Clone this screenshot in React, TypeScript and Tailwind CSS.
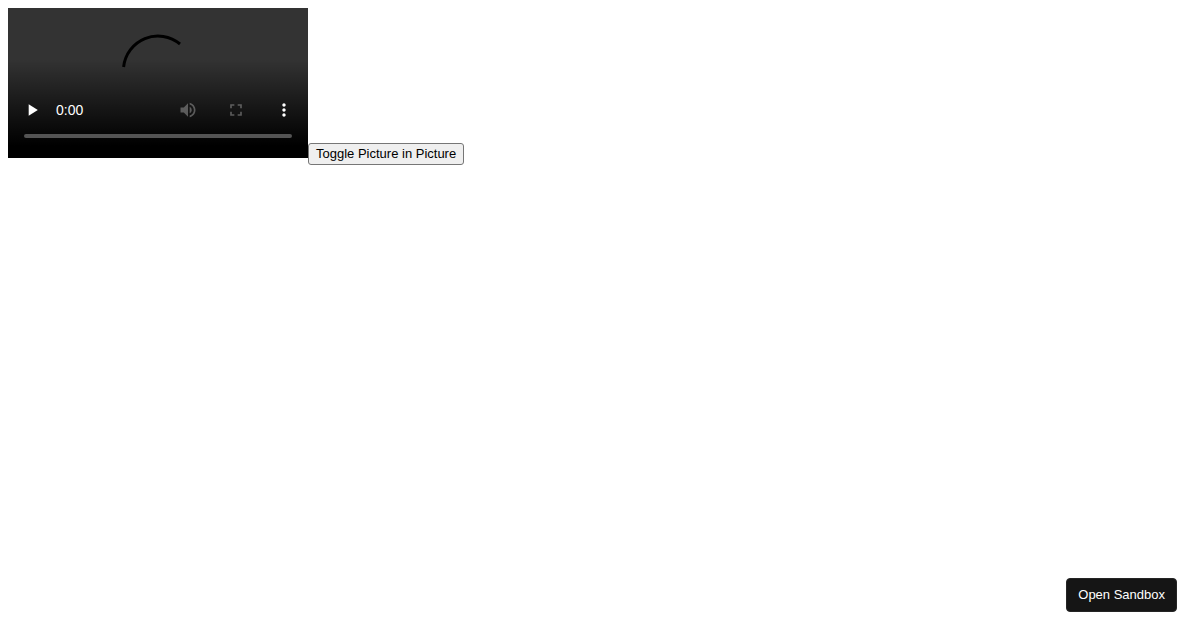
import { MdFullscreen, MdMoreVert, MdPlayArrow, MdVolumeUp } from 'react-icons/md';

function Spinner() {
  return (
    <svg
      className="absolute left-0 top-0"
      width="300"
      height="150"
      viewBox="0 0 300 150"
      fill="none"
      aria-hidden="true"
    >
      <path
        d="M115.6 59A34.5 34.5 0 0 1 172 36"
        stroke="#000"
        strokeWidth="3"
      />
    </svg>
  );
}

function VideoPlayer() {
  return (
    <section
      aria-label="Video player"
      className="relative flex w-[300px] flex-col bg-[#333] pt-[78px] font-['Liberation_Sans',Arial,sans-serif]"
    >
      <div className="absolute inset-0 bg-[linear-gradient(to_bottom,transparent_34%,#000000a0_70%,#000_92%)]" />
      <Spinner />
      <div className="relative flex h-12 items-center text-white">
        <button type="button" aria-label="Play" className="flex size-12 items-center justify-center">
          <MdPlayArrow className="size-5" />
        </button>
        <span className="text-sm">0:00</span>
        <div className="ml-auto flex">
          <button
            type="button"
            aria-label="Mute"
            disabled
            className="flex size-12 items-center justify-center opacity-30"
          >
            <MdVolumeUp className="size-5" />
          </button>
          <button
            type="button"
            aria-label="Full screen"
            disabled
            className="flex size-12 items-center justify-center opacity-30"
          >
            <MdFullscreen className="size-5" />
          </button>
          <button
            type="button"
            aria-label="More options"
            className="flex size-12 items-center justify-center"
          >
            <MdMoreVert className="size-5" />
          </button>
        </div>
      </div>
      <input
        type="range"
        aria-label="Seek"
        min={0}
        max={100}
        defaultValue={0}
        disabled
        className="relative mx-4 mb-5 block h-1 appearance-none rounded-full bg-[#545454] [&::-webkit-slider-thumb]:size-0 [&::-webkit-slider-thumb]:appearance-none"
      />
    </section>
  );
}

export default function App() {
  return (
    <main className="min-h-screen bg-white p-2 font-['Liberation_Sans',Arial,sans-serif] text-[13px]">
      <div className="flex items-end">
        <div className="pb-[7px]">
          <VideoPlayer />
        </div>
        <button
          type="button"
          className="rounded-[3px] border border-[#767676] bg-[#efefef] px-[7px] leading-5 text-black"
        >
          Toggle Picture in Picture
        </button>
      </div>
      <a
        href="#sandbox"
        className="fixed right-[23px] bottom-[18px] rounded-sm border border-[#252525] bg-[#151515] px-[11px] py-1.5 leading-5 text-white"
      >
        Open Sandbox
      </a>
    </main>
  );
}
